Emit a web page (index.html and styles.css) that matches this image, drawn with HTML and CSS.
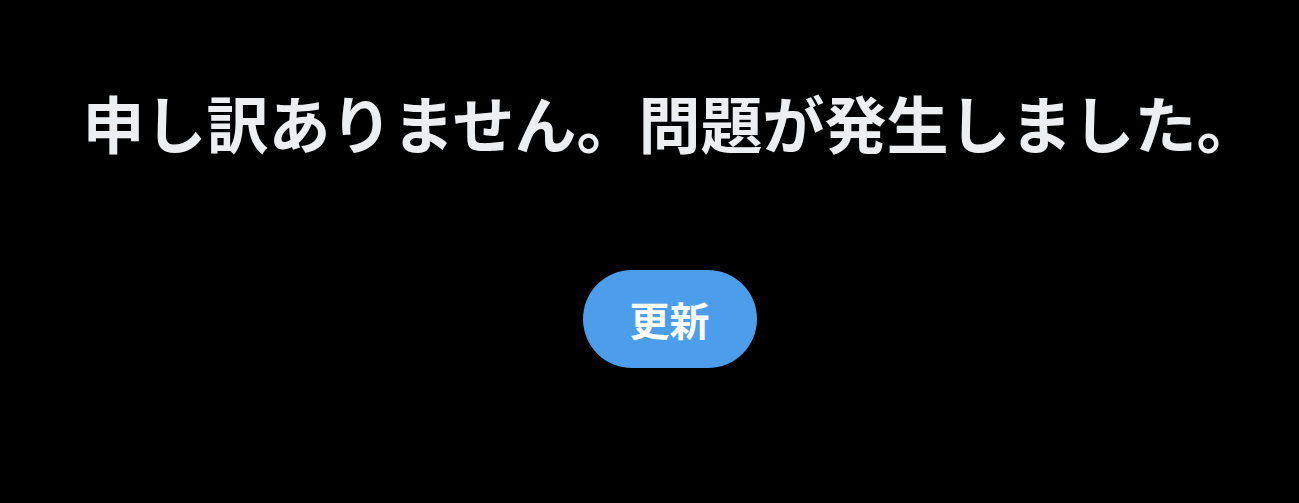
FILE: index.html
```html
<!DOCTYPE html>
<html lang="ja">
<head>
<meta charset="utf-8">
<link rel="stylesheet" href="styles.css">
</head>
<body>
<main class="error">
  <h1 class="error-title">申し訳ありません。問題が発生しました。</h1>
  <button class="refresh">更新</button>
</main>
</body>
</html>
```
FILE: styles.css
```css
html, body {
  margin: 0;
  padding: 0;
  background: #000;
  height: 100%;
}
.error {
  display: flex;
  flex-direction: column;
  align-items: center;
  padding-top: 82px;
  font-family: "Noto Sans CJK JP", "Noto Sans", sans-serif;
}
.error-title {
  margin: 0;
  color: #eceeef;
  font-size: 62px;
  font-weight: 700;
  line-height: 80px;
  padding-left: 42px;
  white-space: nowrap;
}
.refresh {
  margin-top: 108px;
  margin-left: 40px;
  width: 174px;
  height: 98px;
  border: none;
  border-radius: 49px;
  background: #4c9eeb;
  color: #fff;
  font-family: "Noto Sans CJK JP", sans-serif;
  font-size: 40px;
  font-weight: 700;
  padding: 0;
}
```
